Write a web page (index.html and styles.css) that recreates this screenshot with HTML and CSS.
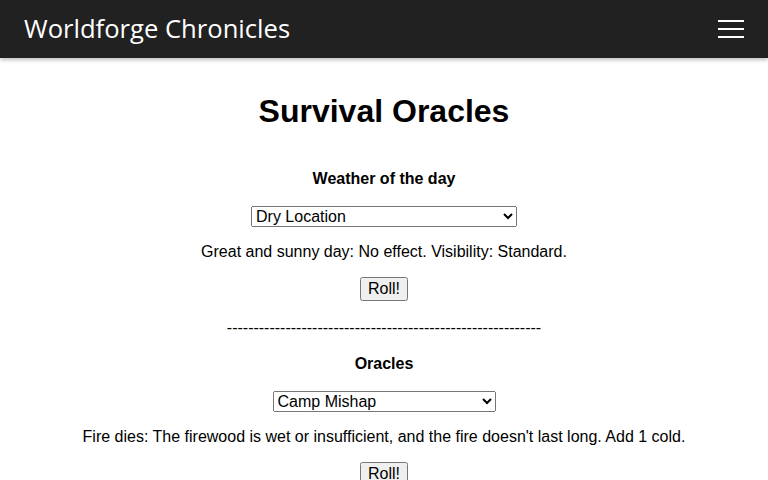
FILE: index.html
```html
<!DOCTYPE html>
<html>
<head>
  <title>Survival Oracles</title>
  <meta charset="utf-8">
  <link rel="stylesheet" href="styles.css">
</head>
<body>
  <div class="topbar">
    <span class="brand">Worldforge Chronicles</span>
    <button class="menu-btn" aria-label="Menu">
      <svg width="26" height="18" viewBox="0 0 26 18">
        <rect x="0" y="0" width="26" height="2" fill="#fff" />
        <rect x="0" y="8" width="26" height="2" fill="#fff" />
        <rect x="0" y="16" width="26" height="2" fill="#fff" />
      </svg>
    </button>
  </div>

  <div class="content">
    <h1>Survival Oracles</h1>

    <h4>Weather of the day</h4>
    <select class="weather-select">
      <option>Dry Location</option>
      <option>Wet Location</option>
      <option>Cold Location</option>
    </select>
    <p>Great and sunny day: No effect. Visibility: Standard.</p>
    <p><button class="roll-btn">Roll!</button></p>

    <p class="divider">-----------------------------------------------------------</p>

    <h4>Oracles</h4>
    <select class="oracle-select">
      <option>Camp Mishap</option>
      <option>Travel Event</option>
    </select>
    <p>Fire dies: The firewood is wet or insufficient, and the fire doesn't last long. Add 1 cold.</p>
    <p><button class="roll-btn">Roll!</button></p>
  </div>
</body>
</html>
```

FILE: styles.css
```css
body {
  margin: 0;
  font-family: "Liberation Sans", Arial, sans-serif;
  font-size: 16px;
  color: #000;
  background: #fff;
}

.topbar {
  height: 58px;
  background-color: #212121;
  display: flex;
  align-items: center;
  justify-content: space-between;
  padding: 0 24px;
  box-shadow: 0 2px 4px rgba(0, 0, 0, 0.25);
}

.brand {
  font-family: "Open Sans", sans-serif;
  font-size: 25.6px;
  color: #fff;
  margin-top: -2px;
}

.menu-btn {
  background: none;
  border: none;
  padding: 0;
  display: flex;
  cursor: pointer;
}

.content {
  text-align: center;
  padding-top: 14px;
}

h1 {
  font-size: 32px;
  margin: 21px 0;
}

h4 {
  font-size: 16px;
  margin: 18px 0 18px;
}

h1 + h4 {
  margin-top: 40px;
}

p {
  margin: 16px 0;
}

select {
  font-family: "Liberation Sans", Arial, sans-serif;
  font-size: 16px;
}

.weather-select {
  width: 266px;
}

.oracle-select {
  width: 223px;
}

.roll-btn {
  font-family: "Liberation Sans", Arial, sans-serif;
  font-size: 16px;
}

.divider {
  margin: 18px 0;
}
```
